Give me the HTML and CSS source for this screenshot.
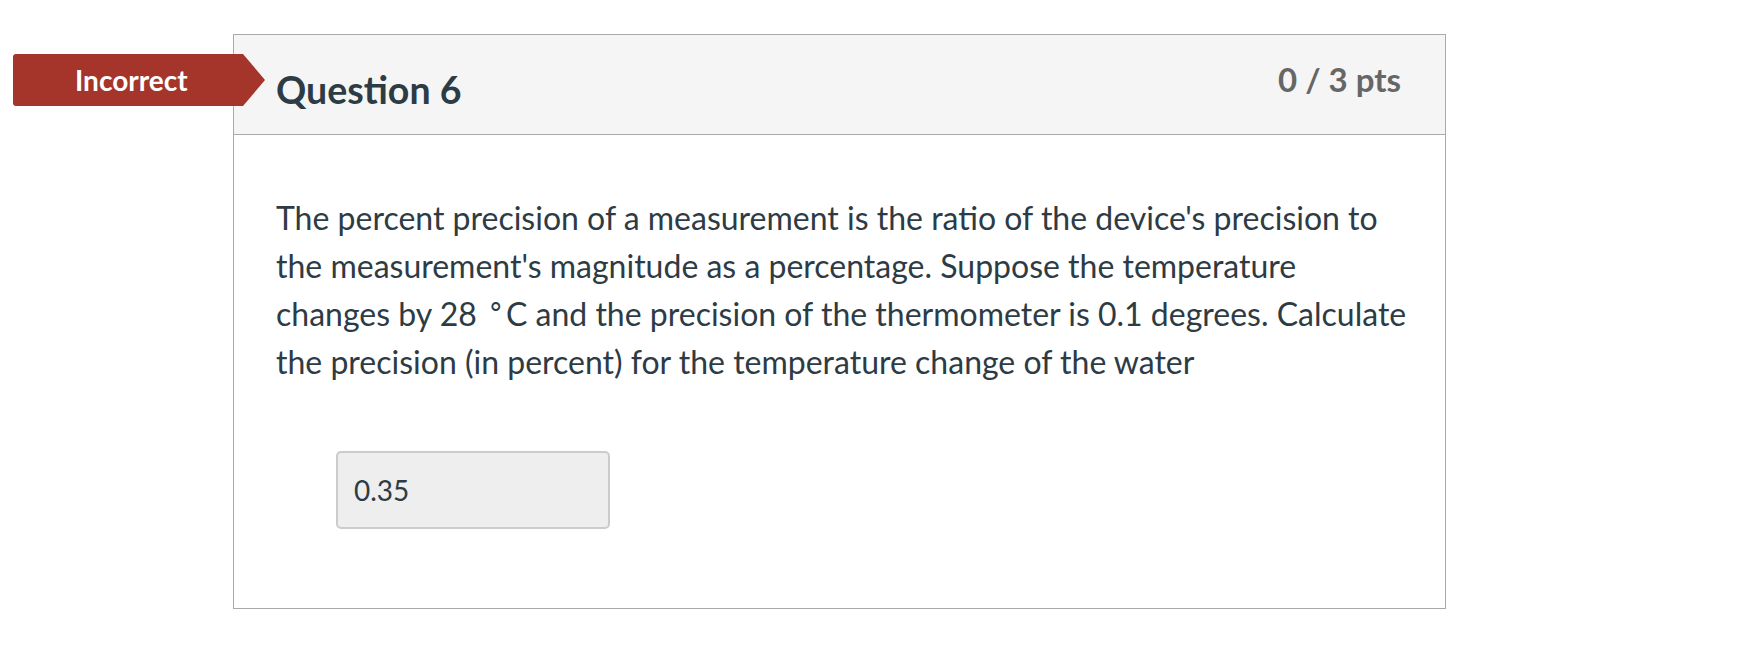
FILE: index.html
```html
<!DOCTYPE html>
<html lang="en">
<head>
<meta charset="utf-8">
<title>Question 6</title>
<link rel="stylesheet" href="styles.css">
</head>
<body>
<div class="page">
  <div class="question">
    <div class="badge"><span class="badge-text">Incorrect</span></div>
    <div class="q-header">
      <h2 class="q-title">Question 6</h2>
      <div class="q-points">0 / 3 pts</div>
    </div>
    <div class="q-body">
      <p class="q-text">The percent precision of a measurement is the ratio of the device's precision to the measurement's magnitude as a percentage. Suppose the temperature changes by 28 <span class="deg">∘</span>C and the precision of the thermometer is 0.1 degrees. Calculate the precision (in percent) for the temperature change of the water</p>
      <div class="answer-row">
        <div class="answer">0.35</div>
      </div>
    </div>
  </div>
</div>
</body>
</html>
```

FILE: styles.css
```css
html, body {
  margin: 0;
  padding: 0;
  background: #ffffff;
}
body {
  font-family: Lato, "Noto Sans", sans-serif;
  color: #2d3b45;
}
.page {
  padding-top: 34px;
  padding-left: 233px;
}
.question {
  position: relative;
  width: 1211px;
  border: 1px solid #aaaaaa;
  background: #ffffff;
}
.badge {
  position: absolute;
  left: -221px;
  top: 19px;
  width: 252px;
  height: 52px;
  background: #a5352b;
  clip-path: polygon(0 0, 230px 0, 252px 26px, 230px 52px, 0 52px);
  border-radius: 3px 0 0 3px;
  display: flex;
  align-items: center;
}
.badge-text {
  color: #ffffff;
  font-weight: 700;
  font-size: 28px;
  line-height: 34px;
  margin-left: 62px;
}
.q-header {
  height: 99px;
  background: #f5f5f5;
  border-bottom: 1px solid #aaaaaa;
  display: flex;
  justify-content: space-between;
  align-items: flex-start;
  padding: 0 44px 0 42px;
}
.q-title {
  margin: 0;
  margin-top: 35px;
  font-size: 37.5px;
  font-weight: 700;
  line-height: 40px;
  color: #2d3b45;
}
.q-points {
  margin-top: 26px;
  font-size: 33px;
  font-weight: 700;
  line-height: 36px;
  color: #666666;
}
.q-body {
  padding: 59px 24px 79px 42px;
}
.q-text {
  margin: 0;
  font-size: 32px;
  line-height: 48px;
  max-width: 1142px;
}
.deg {
  display: inline-block;
  font-size: 28px;
  line-height: 20px;
  vertical-align: 12px;
  margin-left: 2px;
  margin-right: 1px;
}
.answer-row {
  margin-top: 65px;
  padding-left: 60px;
}
.answer {
  box-sizing: border-box;
  width: 274px;
  height: 78px;
  background: #eeeeee;
  border: 2px solid #cccccc;
  border-radius: 5px;
  font-size: 28px;
  line-height: 74px;
  padding-left: 16px;
  color: #2d3b45;
}
```
